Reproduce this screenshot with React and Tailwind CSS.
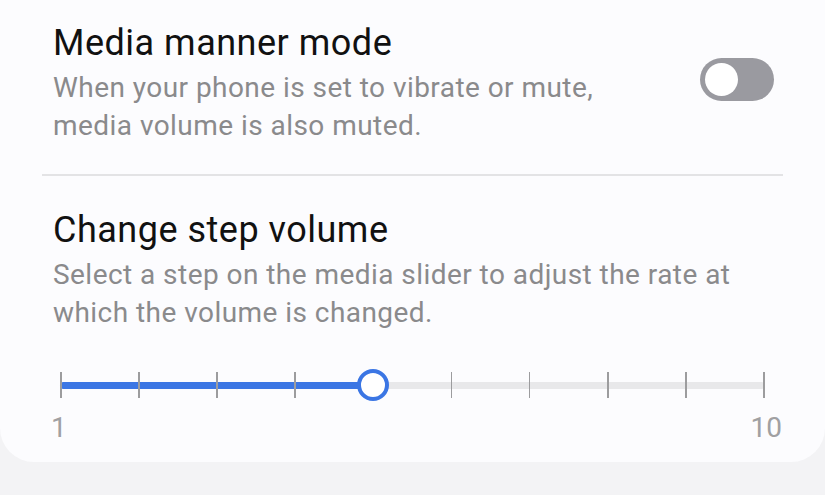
import React from "react";

export default function App() {
  const ticks = Array.from({ length: 10 }, (_, i) => i);
  return (
    <div className="w-[825px] h-[495px] bg-[#f3f3f5] overflow-hidden" style={{ fontFamily: "Roboto, 'Noto Sans', sans-serif" }}>
      <div className="bg-[#fcfcfe] rounded-b-[34px] h-[462px] px-[42px] flex flex-col">
        <div className="flex items-start justify-between pl-[11px] pr-[9px] pt-[21px] h-[174px]">
          <div>
            <div className="text-[36px] leading-[44px] tracking-[0.5px] text-[#111]">Media manner mode</div>
            <div className="text-[28px] leading-[38px] tracking-[0.45px] text-[#8a8a8c] mt-[4px]">
              When your phone is set to vibrate or mute,<br />media volume is also muted.
            </div>
          </div>
          <div className="mt-[37px] w-[74px] h-[43px] rounded-full bg-[#9a9aa0] flex items-center pl-[5px]">
            <div className="w-[33px] h-[33px] rounded-full bg-white" />
          </div>
        </div>
        <div className="h-[2px] bg-[#e3e3e5]" />
        <div className="pl-[11px] pt-[32px]">
          <div className="text-[36px] leading-[44px] tracking-[0.5px] text-[#111]">Change step volume</div>
          <div className="text-[28px] leading-[38px] tracking-[0.45px] text-[#8a8a8c] mt-[4px]">
            Select a step on the media slider to adjust the rate at<br />which the volume is changed.
          </div>
        </div>
        <div className="relative mt-[40px] ml-[18px] w-[705px] h-[26px] flex items-center">
          <div className="w-full h-[7px] rounded-full bg-[#e8e8ea] flex">
            <div className="w-[313px] h-full rounded-full bg-[#3b76e4]" />
          </div>
          <div className="absolute inset-0 flex justify-between">
            {ticks.map((i) => (
              <div key={i} className={i === 4 ? "w-[1.5px] h-full" : "w-[1.5px] h-full bg-[#9c9c9e]"} />
            ))}
          </div>
          <div className="absolute left-[297px] top-[-3px] w-[32px] h-[32px] rounded-full border-[4px] border-[#3b76e4] bg-white" />
        </div>
        <div className="flex justify-between pl-[9px] pr-[1px] mt-[15px] text-[28px] leading-[30px] text-[#a0a0a2]">
          <span>1</span>
          <span>10</span>
        </div>
      </div>
    </div>
  );
}
